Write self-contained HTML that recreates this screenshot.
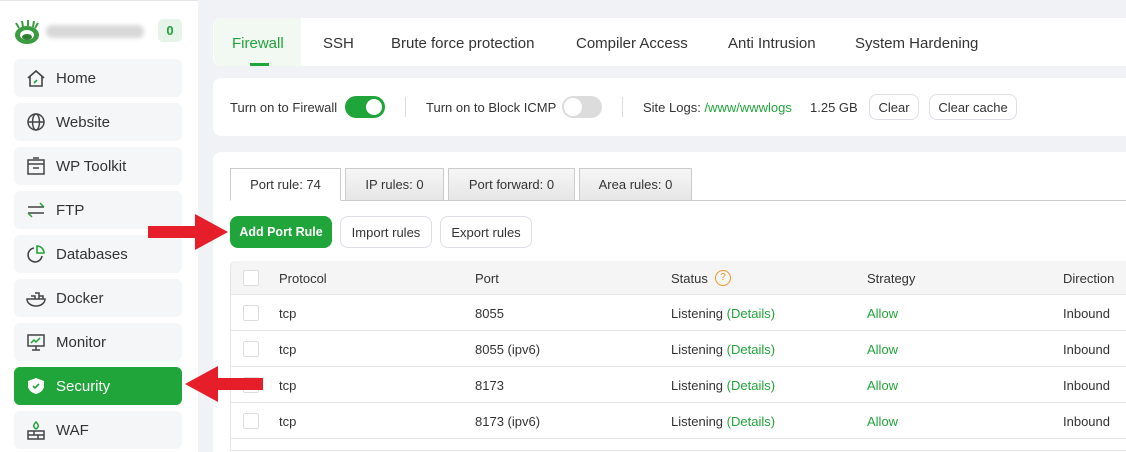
<!DOCTYPE html><html style="height:452px;overflow:hidden"><head><style>
*{box-sizing:border-box;margin:0;padding:0}
body{width:1126px;height:452px;overflow:hidden;background:#f0f2f5;font-family:"Liberation Sans",sans-serif;font-size:13px;color:#333;position:relative}
.sb{position:absolute;left:0;top:0;width:198px;height:452px;background:#fff;border-top:1px solid #e4e4e4}
.it{position:absolute;left:14px;width:168px;height:38px;background:#f5f6f8;border-radius:6px;font-size:15px;color:#333;display:flex;align-items:center;padding-left:42px}
.it svg{position:absolute;left:12px;top:10px}
.it.on{background:#20a53a;color:#fff}
.card{position:absolute;left:213px;right:0;background:#fff;border-radius:8px 0 0 8px}
.abs{position:absolute}
.g{color:#20a53a}
.btn{position:absolute;height:26px;border:1px solid #dcdfe6;border-radius:8px;font-size:13px;display:flex;align-items:center;justify-content:center;color:#333;background:#fff}
.st{position:absolute;top:168px;height:33px;border:1px solid #ccc;background:linear-gradient(#f6f6f6,#e6e6e6);font-size:13px;display:flex;align-items:center;justify-content:center}
.cb{position:absolute;left:243px;width:16px;height:16px;border:1px solid #ddd;border-radius:2px;background:#fff}
.row{position:absolute;left:230px;right:0;height:36px;border-top:1px solid #e6e6e6;font-size:13px}
.row span{position:absolute;top:11px}
</style></head><body>
<div class="sb">
<svg class="abs" style="left:13px;top:18px" width="28" height="26"><path d="M3 4l3 5M9 2l1 6M15 1v6M21 2l-1 6M25 4l-3 5" stroke="#3a9c3f" stroke-width="2"/><ellipse cx="14" cy="16" rx="12" ry="9" fill="#3a9c3f"/><ellipse cx="14" cy="16" rx="7" ry="5" fill="#fff"/><ellipse cx="14" cy="18" rx="5" ry="3" fill="#2e7d32"/></svg>
<div class="abs" style="left:46px;top:24px;width:98px;height:13px;background:#d8d8d8;border-radius:6px;filter:blur(2px)"></div>
<div class="abs" style="left:158px;top:18px;width:24px;height:23px;background:#e6f4ea;border-radius:5px;color:#20a53a;font-weight:bold;font-size:13px;text-align:center;line-height:23px">0</div>
<div class="it" style="top:58px"><svg width="20" height="18" fill="none" stroke="#444" stroke-width="1.6"><path d="M2 9L10 2l8 7M4 7v10h12V7"/><path d="M8 14l3-3" stroke="#20a53a"/></svg>Home</div>
<div class="it" style="top:102px"><svg width="20" height="18" fill="none" stroke="#444" stroke-width="1.5"><circle cx="10" cy="9" r="8"/><ellipse cx="10" cy="9" rx="3.5" ry="8"/><path d="M2 9h16"/></svg>Website</div>
<div class="it" style="top:146px"><svg width="20" height="18" fill="none" stroke="#444" stroke-width="1.5"><rect x="2" y="3" width="16" height="14"/><path d="M2 7h16M7 1h6M7 11h6"/></svg>WP Toolkit</div>
<div class="it" style="top:190px"><svg width="20" height="18" fill="none" stroke="#444" stroke-width="1.5"><path d="M2 6h16M2 12h16"/><path d="M14 2l4 4M6 16l-4-4" stroke="#20a53a"/></svg>FTP</div>
<div class="it" style="top:234px"><svg width="20" height="18" fill="none" stroke="#444" stroke-width="1.6"><path d="M8 3a7 7 0 1 0 8 8"/><path d="M11 1v7h7a7 7 0 0 0-7-7z" stroke="#20a53a"/></svg>Databases</div>
<div class="it" style="top:278px"><svg width="22" height="18" fill="none" stroke="#444" stroke-width="1.5"><path d="M1 10h18c0 4-4 7-9 7S1 14 1 10zM5 7h4v3M9 4h4v6M13 7h4v3"/></svg>Docker</div>
<div class="it" style="top:322px"><svg width="20" height="18" fill="none" stroke="#444" stroke-width="1.5"><rect x="2" y="2" width="16" height="11"/><path d="M10 13v4M6 17h8"/><path d="M5 10l3-3 2 2 4-4" stroke="#20a53a"/></svg>Monitor</div>
<div class="it on" style="top:366px"><svg width="20" height="18"><path d="M10 1l8 3v5c0 4-4 7-8 8-4-1-8-4-8-8V4z" fill="#fff"/><path d="M7 9l2 2 4-4" stroke="#20a53a" stroke-width="1.6" fill="none"/></svg>Security</div>
<div class="it" style="top:410px"><svg width="20" height="20" fill="none" stroke="#444" stroke-width="1.5"><path d="M2 10h16v8H2zM2 14h16M8 10v4M12 14v4"/><path d="M10 1c3 3 3 5 0 7-3-2-3-4 0-7z" stroke="#20a53a"/></svg>WAF</div>
</div>

<div class="card" style="top:18px;height:48px">
<div class="abs" style="left:1px;top:0;width:87px;height:48px;background:#f2f8f2;border-radius:8px 0 0 8px"></div>
<div class="abs g" style="left:19px;top:17px;font-size:15px">Firewall</div>
<div class="abs" style="left:37px;top:45px;width:19px;height:3px;background:#20a53a"></div>
<div class="abs" style="left:110px;top:17px;font-size:15px">SSH</div>
<div class="abs" style="left:178px;top:17px;font-size:15px">Brute force protection</div>
<div class="abs" style="left:363px;top:17px;font-size:15px">Compiler Access</div>
<div class="abs" style="left:515px;top:17px;font-size:15px">Anti Intrusion</div>
<div class="abs" style="left:642px;top:17px;font-size:15px">System Hardening</div>
</div>

<div class="card" style="top:78px;height:58px">
<div class="abs" style="left:17px;top:22px">Turn on to Firewall</div>
<div class="abs" style="left:132px;top:18px;width:40px;height:22px;border-radius:11px;background:#20a53a"><div class="abs" style="right:3px;top:3px;width:16px;height:16px;border-radius:50%;background:#fff"></div></div>
<div class="abs" style="left:192px;top:19px;width:1px;height:20px;background:#ddd"></div>
<div class="abs" style="left:213px;top:22px">Turn on to Block ICMP</div>
<div class="abs" style="left:349px;top:18px;width:40px;height:22px;border-radius:11px;background:#dcdcdc"><div class="abs" style="left:2px;top:2px;width:18px;height:18px;border-radius:50%;background:#fff"></div></div>
<div class="abs" style="left:409px;top:19px;width:1px;height:20px;background:#ddd"></div>
<div class="abs" style="left:430px;top:22px">Site Logs: <span class="g">/www/wwwlogs</span></div>
<div class="abs" style="left:597px;top:22px">1.25 GB</div>
<div class="btn" style="left:656px;top:16px;width:50px">Clear</div>
<div class="btn" style="left:716px;top:16px;width:88px">Clear cache</div>
</div>

<div class="card" style="top:152px;height:310px"></div>
<div class="abs" style="left:230px;top:200px;right:0;height:1px;background:#ccc"></div>
<div class="st" style="left:230px;width:111px;background:#fff;border-bottom-color:#fff">Port rule: 74</div>
<div class="st" style="left:345px;width:99px">IP rules: 0</div>
<div class="st" style="left:448px;width:127px">Port forward: 0</div>
<div class="st" style="left:579px;width:113px">Area rules: 0</div>

<div class="btn" style="left:230px;top:216px;width:102px;height:32px;background:#20a53a;border-color:#20a53a;color:#fff;font-size:12.5px;font-weight:bold">Add Port Rule</div>
<div class="btn" style="left:340px;top:216px;width:92px;height:32px">Import rules</div>
<div class="btn" style="left:440px;top:216px;width:92px;height:32px">Export rules</div>

<div class="abs" style="left:230px;top:261px;right:0;height:190px;border:1px solid #e6e6e6;border-right:none;border-radius:6px 0 0 0"></div>
<div class="row" style="top:261px;height:34px;background:#f5f5f5;border-top:none;border-radius:6px 0 0 0;left:231px"><span style="left:48px;top:10px">Protocol</span><span style="left:244px;top:10px">Port</span><span style="left:440px;top:10px">Status</span><span style="left:484px;top:9px;width:16px;height:16px;border:1.5px solid #f0952a;border-radius:50%;color:#f0952a;font-size:10px;text-align:center;line-height:13px">?</span><span style="left:636px;top:10px">Strategy</span><span style="left:832px;top:10px">Direction</span></div>
<div class="cb" style="top:270px"></div>
<div class="row" style="top:294px"><span style="left:49px">tcp</span><span style="left:245px">8055</span><span style="left:441px">Listening <span class="g" style="position:static">(Details)</span></span><span class="g" style="left:637px">Allow</span><span style="left:833px">Inbound</span></div>
<div class="row" style="top:330px"><span style="left:49px">tcp</span><span style="left:245px">8055 (ipv6)</span><span style="left:441px">Listening <span class="g" style="position:static">(Details)</span></span><span class="g" style="left:637px">Allow</span><span style="left:833px">Inbound</span></div>
<div class="row" style="top:366px"><span style="left:49px">tcp</span><span style="left:245px">8173</span><span style="left:441px">Listening <span class="g" style="position:static">(Details)</span></span><span class="g" style="left:637px">Allow</span><span style="left:833px">Inbound</span></div>
<div class="row" style="top:402px"><span style="left:49px">tcp</span><span style="left:245px">8173 (ipv6)</span><span style="left:441px">Listening <span class="g" style="position:static">(Details)</span></span><span class="g" style="left:637px">Allow</span><span style="left:833px">Inbound</span></div>
<div class="row" style="top:438px"></div>
<div class="cb" style="top:305px"></div><div class="cb" style="top:341px"></div><div class="cb" style="top:377px"></div><div class="cb" style="top:413px"></div>

<svg class="abs" style="left:0;top:0" width="1126" height="452"><path d="M148 226h47v-12l33 18-33 18v-12h-47z" fill="#e61e2a"/><path d="M263 378h-45v-12l-33 18 33 18v-12h45z" fill="#e61e2a"/></svg>
</body></html>
